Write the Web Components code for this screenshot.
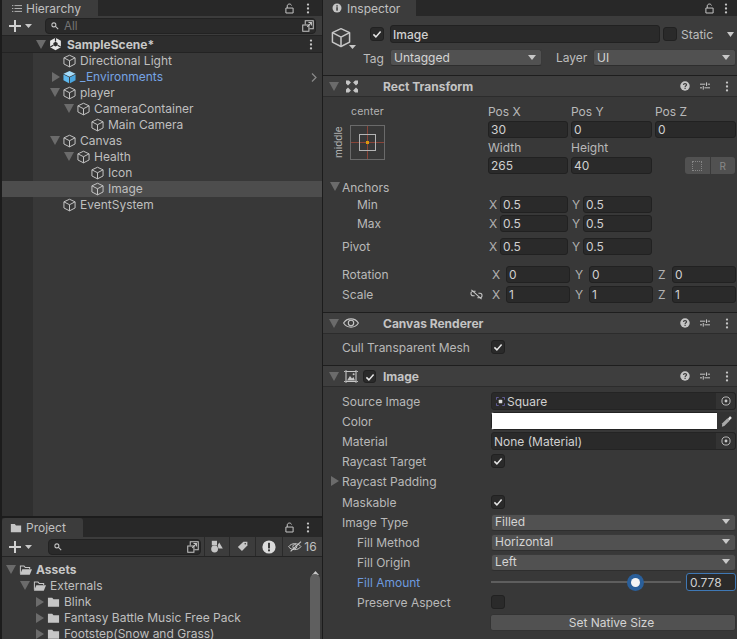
<!DOCTYPE html>
<html><head><meta charset="utf-8"><style>
html,body{margin:0;padding:0;background:#1c1c1c;overflow:hidden}
body{font:12px Inter,"Liberation Sans",sans-serif;color:#bdbdbd}
</style></head><body>
<u-app>
 <u-left slot="left">
  <u-tabbar tabw="96" icon="list">Hierarchy</u-tabbar>
  <u-toolbar search="Hierarchy"></u-toolbar>
  <u-tree stripe>
   <u-row level="0" arrow="down" icon="unity" bold scene>SampleScene*</u-row>
   <u-row level="1" icon="cube">Directional Light</u-row>
   <u-row level="1" arrow="right" icon="bluecube" blue chevron>_Environments</u-row>
   <u-row level="1" arrow="down" icon="cube">player</u-row>
   <u-row level="2" arrow="down" icon="cube">CameraContainer</u-row>
   <u-row level="3" icon="cube">Main Camera</u-row>
   <u-row level="1" arrow="down" icon="cube">Canvas</u-row>
   <u-row level="2" arrow="down" icon="cube">Health</u-row>
   <u-row level="3" icon="cube">Icon</u-row>
   <u-row level="3" icon="cube" selected>Image</u-row>
   <u-row level="1" icon="cube">EventSystem</u-row>
  </u-tree>
 </u-left>
 <u-left slot="left2" project>
  <u-tabbar tabw="81" icon="folder" tall>Project</u-tabbar>
  <u-toolbar search="Project"></u-toolbar>
  <u-ptree>
   <u-row project level="0" arrow="down" icon="open" bold>Assets</u-row>
   <u-row project level="1" arrow="down" icon="open">Externals</u-row>
   <u-row project level="2" arrow="right" icon="folder">Blink</u-row>
   <u-row project level="2" arrow="right" icon="folder">Fantasy Battle Music Free Pack</u-row>
   <u-row project level="2" arrow="right" icon="folder">Footstep(Snow and Grass)</u-row>
  </u-ptree>
 </u-left>
 <u-inspector slot="right">
  <u-tabbar tabw="93" icon="info" inspector>Inspector</u-tabbar>
  <u-go></u-go>

  <u-comp icon="rect">Rect Transform</u-comp>
  <u-rectblock>
   <u-cap>Pos X</u-cap><u-cap>Pos Y</u-cap><u-cap>Pos Z</u-cap>
   <u-field>30</u-field><u-field>0</u-field><u-field>0</u-field>
   <u-cap>Width</u-cap><u-cap>Height</u-cap><span></span>
   <u-field>265</u-field><u-field>40</u-field><u-rbtns></u-rbtns>
  </u-rectblock>
  <u-prop arrow h="18" t="4" start="488">Anchors</u-prop>
  <u-prop indent h="17" start="488"><u-axes slot="v" n="2"><u-axis>X</u-axis><u-field>0.5</u-field><u-axis>Y</u-axis><u-field>0.5</u-field></u-axes>Min</u-prop>
  <u-prop indent h="17" t="2" start="488"><u-axes slot="v" n="2"><u-axis>X</u-axis><u-field>0.5</u-field><u-axis>Y</u-axis><u-field>0.5</u-field></u-axes>Max</u-prop>
  <u-prop h="18" t="5" start="488"><u-axes slot="v" n="2"><u-axis>X</u-axis><u-field>0.5</u-field><u-axis>Y</u-axis><u-field>0.5</u-field></u-axes>Pivot</u-prop>
  <u-prop h="18" t="10" start="491"><u-axes slot="v" n="3"><u-axis>X</u-axis><u-field>0</u-field><u-axis>Y</u-axis><u-field>0</u-field><u-axis>Z</u-axis><u-field>0</u-field></u-axes>Rotation</u-prop>
  <u-prop h="18" t="2" start="491" unlink><u-axes slot="v" n="3"><u-axis>X</u-axis><u-field>1</u-field><u-axis>Y</u-axis><u-field>1</u-field><u-axis>Z</u-axis><u-field>1</u-field></u-axes>Scale</u-prop>

  <u-comp icon="eye" t="9">Canvas Renderer</u-comp>
  <u-prop h="20" t="3"><u-check slot="v" on></u-check>Cull Transparent Mesh</u-prop>

  <u-comp icon="image" check t="8">Image</u-comp>
  <u-prop h="20" t="4"><u-objfield slot="v" kind="sprite">Square</u-objfield>Source Image</u-prop>
  <u-prop h="20"><u-colorfield slot="v"></u-colorfield>Color</u-prop>
  <u-prop h="20"><u-objfield slot="v">None (Material)</u-objfield>Material</u-prop>
  <u-prop h="20"><u-check slot="v" on></u-check>Raycast Target</u-prop>
  <u-prop h="20" arrow="right">Raycast Padding</u-prop>
  <u-prop h="20" t="1"><u-check slot="v" on></u-check>Maskable</u-prop>
  <u-prop h="20"><u-select slot="v">Filled</u-select>Image Type</u-prop>
  <u-prop h="20" indent><u-select slot="v">Horizontal</u-select>Fill Method</u-prop>
  <u-prop h="20" indent><u-select slot="v">Left</u-select>Fill Origin</u-prop>
  <u-prop h="20" indent blue><u-slider slot="v" value="0.778"></u-slider>Fill Amount</u-prop>
  <u-prop h="20" indent><u-check slot="v"></u-check>Preserve Aspect</u-prop>
  <u-button>Set Native Size</u-button>
 </u-inspector>
</u-app>
<script>
const C='#c6c6c6';
const ICONS={
 cube:`<svg viewBox="0 0 14 14" fill="none" stroke="${C}" stroke-width="1.05" stroke-linejoin="round"><path d="M7 .8 13 3.6V10.2L7 13.3 1 10.2V3.6Z"/><path d="M1 3.6 7 6.7 13 3.6M7 6.7V13.3"/></svg>`,
 bluecube:`<svg viewBox="0 0 14 14"><path d="M7 .5 13.5 3.5 7 6.6.5 3.5Z" fill="#a5dcfb"/><path d="M.5 4.4 6.5 7.4V13.7L.5 10.6Z" fill="#5db8ee"/><path d="M13.5 4.4 7.5 7.4V13.7L13.5 10.6Z" fill="#4aa6e0"/></svg>`,
 unity:`<svg viewBox="0 0 14 14"><path d="M7 .3 12.8 3.6V10.4L7 13.7 1.2 10.4V3.6Z" fill="#e8e8e8"/><path d="M7 4.4V.6M4.7 8.3 1.4 10.2M9.3 8.3 12.6 10.2" stroke="#2c2c2c" stroke-width="1.3"/><path d="M7 4.6 9.3 5.9V8.3L7 9.6 4.7 8.3V5.9Z" fill="#2c2c2c"/></svg>`,
 folder:`<svg viewBox="0 0 14 14"><path d="M1 2.4H5.6L7 4H13V12H1Z" fill="${C}"/></svg>`,
 open:`<svg viewBox="0 0 14 14" fill="none"><path d="M1.5 11V2.8H5.4L6.8 4.4H11.5V6" stroke="${C}" stroke-width="1.1"/><path d="M1 12 3.6 6.2H14L11.6 12Z" fill="${C}"/></svg>`,
 list:`<svg viewBox="0 0 12 10" fill="none" stroke="${C}"><path d="M3 1.5H12M3 5H12M3 8.5H12M0 1.5H1.6M0 5H1.6M0 8.5H1.6"/></svg>`,
 info:`<svg viewBox="0 0 12 12"><circle cx="6" cy="6" r="5.4" fill="${C}"/><rect x="5.2" y="5" width="1.7" height="4.2" fill="#303030"/><rect x="5.2" y="2.7" width="1.7" height="1.6" fill="#303030"/></svg>`,
 lock:`<svg viewBox="0 0 10 12" fill="none" stroke="${C}" stroke-width="1.1"><path d="M1 5.5H9V11H1Z"/><path d="M2.5 5.5V3.2C2.5 .6 6.6 .3 7.2 2.6"/></svg>`,
 dots:`<svg viewBox="0 0 4 12" fill="${C}"><circle cx="2" cy="1.7" r="1.25"/><circle cx="2" cy="6" r="1.25"/><circle cx="2" cy="10.3" r="1.25"/></svg>`,
 help:`<svg viewBox="0 0 11 11"><circle cx="5.5" cy="5.5" r="5.2" fill="${C}"/><path d="M3.7 4.2C3.9 2.4 7.3 2.5 7.3 4.2 7.3 5.3 5.6 5.3 5.6 6.6" fill="none" stroke="#3c3c3c" stroke-width="1.2"/><rect x="4.9" y="7.4" width="1.4" height="1.3" fill="#3c3c3c"/></svg>`,
 sliders:`<svg viewBox="0 0 11 10" fill="none" stroke="${C}" stroke-width="1.1"><path d="M0 3H5.8M8.5 3H11M7.2 1V5M0 7H2.3M5 7H11M3.6 5V9"/></svg>`,
 rect:`<svg viewBox="0 0 13 13" fill="${C}"><path d="M.5 .5H3.4L5.4 2.5 2.5 5.4.5 3.4ZM12.5 .5V3.4L10.5 5.4 7.6 2.5 9.6 .5ZM.5 12.5V9.6L2.5 7.6 5.4 10.5 3.4 12.5ZM12.5 12.5H9.6L7.6 10.5 10.5 7.6 12.5 9.6Z"/></svg>`,
 eye:`<svg viewBox="0 0 16 12" fill="none" stroke="${C}" stroke-width="1.1"><path d="M.6 6C4 .5 12 .5 15.4 6 12 11.5 4 11.5.6 6Z"/><circle cx="8" cy="6" r="2.7"/></svg>`,
 image:`<svg viewBox="0 0 14 13" fill="none" stroke="${C}" stroke-width="1.1"><path d="M2 1.5H12V11.5H2Z"/><path d="M0 1.5H1.5M0 11.5H1.5M12.5 1.5H14M12.5 11.5H14M2 0V1M12 0V1M2 12V13M12 12V13" stroke-width=".9"/><path d="M3 10.5 6 6 8 8.4 9.5 7 11 10.5Z" fill="${C}" stroke="none"/><circle cx="9.6" cy="4.2" r="1" fill="${C}" stroke="none"/></svg>`,
 unlink:`<svg viewBox="0 0 13 11" fill="none" stroke="${C}" stroke-width="1.05"><path d="M5.6 2.2H3C.3 2.2.3 6.8 3 6.8H4.6M7.4 8.8H10C12.7 8.8 12.7 4.2 10 4.2H8.4M1.4 .8 11.6 10.2"/></svg>`,
 search:`<svg viewBox="0 0 10 10" fill="none" stroke="${C}" stroke-width="1.3"><circle cx="3.6" cy="3.6" r="2.5"/><path d="M5.6 5.6 9 9"/></svg>`,
 link:`<svg viewBox="0 0 13 13" fill="none" stroke="${C}" stroke-width="1.1"><path d="M3.5 5V.8H12.2V9.5H8"/><path d="M.8 5.5H7.5V12.2H.8Z"/><path d="M5.6 7.4 10 3M7 2.8H10.2V6" /></svg>`,
 shapes:`<svg viewBox="0 0 12 13" fill="${C}"><circle cx="3.6" cy="9" r="3.4"/><path d="M.8 .8H6V5.4H.8Z"/><path d="M8.2 2.4 11.8 8.4H7.4L6.8 5Z"/></svg>`,
 tag:`<svg viewBox="0 0 12 12" fill="${C}"><path d="M7 .8H11.3V5L5.4 11 .9 6.6Z"/><circle cx="9" cy="3" r=".9" fill="#3c3c3c"/></svg>`,
 warn:`<svg viewBox="0 0 14 14"><circle cx="7" cy="7" r="6.6" fill="#dcdcdc"/><rect x="6" y="2.8" width="2" height="5.6" fill="#3c3c3c"/><rect x="6" y="9.4" width="2" height="1.9" fill="#3c3c3c"/></svg>`,
 eyeslash:`<svg viewBox="0 0 14 11" fill="none" stroke="${C}" stroke-width="1"><path d="M.6 5.8C3.5 1.6 10 1.6 13 5.6 10 9.6 3.6 9.6.6 5.8Z"/><circle cx="6.8" cy="5.6" r="2"/><path d="M13 .6 2.6 10.4" stroke-width="1.2"/></svg>`,
 target:`<svg viewBox="0 0 11 11" fill="none" stroke="${C}"><circle cx="5.5" cy="5.5" r="4.5"/><circle cx="5.5" cy="5.5" r="1.6" fill="${C}" stroke="none"/></svg>`,
 dropper:`<svg viewBox="0 0 12 12"><path d="M6.8 2.6 9.4 5.2 3.6 11 1 11.6 1.4 8Z" fill="#a8a8a8"/><path d="M6 1.8 7.6 3 9.2.9C10.4 0 12.2 1.6 11.2 2.9L9.2 4.6 10.4 6Z" fill="#e0e0e0"/></svg>`,
 sprite:`<svg viewBox="0 0 10 10" fill="none"><path d="M.5 3V.5H3M7 .5H9.5V3M9.5 7V9.5H7M3 9.5H.5V7" stroke="#6a64a8"/><rect x="3" y="3" width="4" height="4" rx="1" fill="#dcdcdc"/></svg>`,
 check:`<svg viewBox="0 0 14 14" fill="none" stroke="#e6e6e6" stroke-width="1.5"><path d="M3.4 7.4 5.9 9.9 10.6 4.4"/></svg>`
};
const tri=(d,c='#6b6b6b')=>d==='right'
 ?`<svg viewBox="0 0 9 10" width="9" height="10"><path d="M1 0 9 5 1 10Z" fill="${c}"/></svg>`
 :`<svg viewBox="0 0 10 9" width="10" height="9"><path d="M0 0H10L5 9Z" fill="${c}"/></svg>`;
const down=(w=8,h=5,c='#c8c8c8')=>`<svg viewBox="0 0 8 5" width="${w}" height="${h}" preserveAspectRatio="none"><path d="M0 0H8L4 5Z" fill="${c}"/></svg>`;
const ic=(n,w,h=w)=>`<span style="display:inline-flex;width:${w}px;height:${h}px;flex:none">${ICONS[n].replace('<svg ',`<svg width="${w}" height="${h}" `)}</span>`;
function def(name,fn){customElements.define(name,class extends HTMLElement{
 connectedCallback(){if(!this.shadowRoot){this.attachShadow({mode:'open'}).innerHTML=fn(this)}}
})}
const A=(e,n)=>e.getAttribute(n),H=(e,n)=>e.hasAttribute(n);

def('u-app',()=>`<style>:host{display:grid;grid-template-columns:322px 415px;grid-template-rows:516px 123px;column-gap:0;width:737px;height:639px;overflow:hidden;background:#1c1c1c}
 .a{grid-column:1;grid-row:1;display:block;padding-left:2px;min-width:0}.b{grid-column:1;grid-row:2;padding:2px 0 0 2px;min-width:0}.c{grid-column:2;grid-row:1/3;padding-left:1px;min-width:0}</style>
 <div class="a"><slot name="left"></slot></div><div class="b"><slot name="left2"></slot></div><div class="c"><slot name="right"></slot></div>`);
def('u-left',e=>`<style>:host{display:flex;flex-direction:column;height:100%;background:#383838;overflow:hidden}</style><slot></slot>`);
def('u-inspector',e=>`<style>:host{display:flex;flex-direction:column;height:639px;background:#383838;overflow:hidden}</style><slot></slot>`);
def('u-tabbar',e=>{const tall=H(e,'tall'),ins=H(e,'inspector');const h=tall?19:16;
 return `<style>:host{display:flex;align-items:center;height:${h}px;background:#282828;flex:none;color:#c0c0c0}
 .t{display:flex;align-items:center;height:100%;width:${A(e,'tabw')}px;background:#3c3c3c;box-sizing:border-box;padding-left:${ins?9:tall?8:10}px;gap:${ins?5:tall?4:4}px;${tall?'border-radius:3px 3px 0 0;':''}}
 .r{margin-left:auto;display:flex;align-items:center;gap:${ins?10:12}px;padding-right:${ins?9:12}px}</style>
 <div class="t">${ic(A(e,'icon'),A(e,'icon')==='list'?10:(ins?10:12),A(e,'icon')==='list'?9:(ins?10:12))}<slot></slot></div>
 <div class="r">${ic('lock',9,11)}${ic('dots',4,11)}</div>`});
def('u-toolbar',e=>{const p=A(e,'search')==='Project';
 return `<style>:host{display:flex;align-items:center;height:20px;box-sizing:border-box;background:#3c3c3c;border-bottom:1px solid #242424;flex:none;padding-left:7px}
 .plus{width:12px;height:12px;position:relative;flex:none}.plus:before,.plus:after{content:"";position:absolute;background:#d0d0d0}.plus:before{left:5px;top:0;width:2.2px;height:12px}.plus:after{left:0;top:5px;width:12px;height:2.2px}
 .drop{margin-left:4px;display:flex}
 .s{margin-left:${p?16:13}px;display:flex;align-items:center;width:${p?153:271}px;height:16px;background:#2a2a2a;border:1px solid #222;border-radius:4px;box-sizing:border-box;padding-left:5px;color:#6f6f6f;gap:5px;font-size:11.5px}
 .l{margin-left:auto;margin-right:1px;display:flex}
 .x{display:flex;align-items:center;justify-content:center;height:100%;border-left:1px solid #2a2a2a;box-sizing:border-box}</style>
 <div class="plus"></div><div class="drop">${down(7,4)}</div>
 <div class="s">${ic('search',8,8)}${p?'':'<span style="color:#757575">All</span>'}<span class="l">${ic('link',12,12)}</span></div>
 ${p?`<div class="x" style="width:25px;margin-left:3px">${ic('shapes',12,13)}</div><div class="x" style="width:26px">${ic('tag',11,11)}</div><div class="x" style="width:27px">${ic('warn',14,14)}</div><div class="x" style="width:40px;gap:2px;color:#c0c0c0">${ic('eyeslash',14,11)}<span>16</span></div>`:''}`});
def('u-tree',e=>`<style>:host{display:block;flex:1;background:linear-gradient(to right,#2f2f2f 31px,#383838 31px)}</style><slot></slot>`);
def('u-ptree',e=>`<style>:host{display:block;flex:1;position:relative;padding-top:5px;overflow:hidden}
 .sb{position:absolute;right:2px;top:0;bottom:0;width:10px}.up{position:absolute;left:2px;top:6px}.th{position:absolute;left:0;top:17px;bottom:-10px;width:10px;background:#5f5f5f;border-radius:5px}</style>
 <slot></slot><div class="sb"><div class="up">${down(7,4,'#c8c8c8').replace('M0 0H8L4 5Z','M0 5H8L4 0Z')}</div><div class="th"></div></div>`);
def('u-row',e=>{const l=+A(e,'level'),pr=H(e,'project'),a=A(e,'arrow');const base=pr?2:32;const sc=H(e,'scene');
 return `<style>:host{display:flex;align-items:center;position:relative;height:16px;box-sizing:border-box;padding-left:${base+14*l}px;color:${H(e,'blue')?'#76a4e4':'#bfbfbf'};white-space:nowrap;
 ${sc?'':'padding-bottom:1px;'}${H(e,'selected')?'background:#4d4d4d;':''}${sc?'height:17px;background:#2d2d2d;border-bottom:1px solid #232323;':''}${H(e,'bold')?'font-weight:700;color:#c8c8c8;':''}}
 .a{width:14px;height:15px;display:flex;align-items:center;justify-content:center;flex:none;margin-right:1px}.i{display:flex;margin-right:${sc?5:4}px}
 .c{position:absolute;right:5px;top:4px}.d{position:absolute;right:9px;top:2px}</style>
 <span class="a">${a?tri(a):''}</span><span class="i">${ic(A(e,'icon'),13,14)}</span><slot></slot>
 ${H(e,'chevron')?`<svg class="c" width="6" height="9" viewBox="0 0 6 9" fill="none" stroke="#8a8a8a" stroke-width="1.2"><path d="M1 .5 5 4.5 1 8.5"/></svg>`:''}
 ${sc?`<span class="d">${ic('dots',4,11)}</span>`:''}`});
def('u-go',()=>`<style>:host{display:grid;grid-template-columns:40px 27px 1fr;grid-template-rows:18px 17px;row-gap:6px;height:59px;box-sizing:border-box;padding:9px 1px 0 0;background:#3c3c3c;flex:none;color:#bdbdbd}
 .i{grid-row:1/3;position:relative}.i svg{position:absolute;left:8px;top:2px}.i .t{position:absolute;left:26px;top:20px}.i .t svg{position:static;display:block}
 .r{display:flex;align-items:center;min-width:0}</style>
 <div class="i">${ICONS.cube.replace('<svg ','<svg width="20" height="21" ')}<span class="t">${down(7,4)}</span></div>
 <u-check style="margin:2px 0 0 7px" on></u-check>
 <div class="r"><u-field bold style="flex:1;height:18px">Image</u-field><u-check style="margin-left:3px"></u-check><span style="margin-left:4px;width:46px">Static</span><span style="margin:0 2px 0 0;display:flex">${down(7,5)}</span></div>
 <div style="line-height:19px">Tag</div>
 <div class="r"><u-select style="width:152px;height:17px">Untagged</u-select><span style="margin-left:14px;width:37px">Layer</span><u-select style="flex:1;height:17px">UI</u-select></div>`);
def('u-comp',e=>`<style>:host{display:grid;grid-template-columns:22px 18px 20px 1fr auto;align-items:center;height:22px;box-sizing:border-box;background:#3e3e3e;border-top:1px solid #1e1e1e;border-bottom:1px solid #2c2c2c;flex:none;margin-top:${A(e,'t')||0}px;color:#c4c4c4;font-weight:700}
 .tr{display:flex;justify-content:flex-end;padding-right:6px;padding-top:1px}.ic{display:flex;margin-left:${A(e,'icon')==='eye'?-2:A(e,'icon')==='image'?-1:0}px}
 .tools{display:flex;align-items:center;gap:10px;padding-right:8px}</style>
 <span class="tr">${tri('down')}</span><span class="ic">${ic(A(e,'icon'),A(e,'icon')==='eye'?16:14,A(e,'icon')==='eye'?12:13)}</span>
 <span>${H(e,'check')?'<u-check style="width:13px;height:13px" on></u-check>':''}</span><span><slot></slot></span>
 <span class="tools">${ic('help',10,10)}${ic('sliders',10,10)}<span style="margin-left:5px;display:flex">${ic('dots',4,11)}</span></span>`);
def('u-rectblock',e=>`<style>:host{display:grid;grid-template-columns:165px 1fr;height:70px;padding-top:7px;flex:none;box-sizing:content-box}
 .l{position:relative}.cn{position:absolute;left:28px;top:1px;font-size:10.5px;letter-spacing:.2px;color:#b4b4b4;line-height:14px}
 .m{position:absolute;left:8px;top:21px;height:35px;writing-mode:vertical-rl;transform:rotate(180deg);text-align:center;font-size:10px;line-height:14px;color:#b4b4b4}
 .b{position:absolute;left:27px;top:21px;width:35px;height:35px;box-sizing:border-box;border:1px solid #6a6a6a}
 .h{position:absolute;left:0;right:0;top:16px;height:1px;background:#8a4438}.v{position:absolute;top:0;bottom:0;left:16px;width:1px;background:#8a4438}
 .b i{position:absolute;left:8px;top:8px;width:17px;height:17px;box-sizing:border-box;border:1px solid #b4b4b4}
 .b b{position:absolute;left:15px;top:15px;width:3px;height:3px;background:#dc980e}
 .g{display:grid;grid-template-columns:80px 81px 81px;column-gap:3px;grid-template-rows:16px 18px 19px 17px;padding-right:1px;align-items:center}
 ::slotted(u-field){align-self:end}</style>
 <div class="l"><span class="cn">center</span><span class="m">middle</span><div class="b"><span class="h"></span><span class="v"></span><i></i><b></b></div></div>
 <div class="g"><slot></slot></div>`);
def('u-cap',()=>`<style>:host{display:block;line-height:16px;color:#b8b8b8}</style><slot></slot>`);
def('u-field',e=>`<style>:host{display:flex;align-items:center;height:17px;box-sizing:border-box;background:#2a2a2a;border:1px solid #212121;border-radius:3px;padding-left:2px;color:#d0d0d0;min-width:0;white-space:nowrap;${H(e,'bold')?'font-weight:500;':''}}</style><slot></slot>`);
def('u-rbtns',()=>`<style>:host{display:flex;justify-self:end;width:50px;height:17px;margin-right:1px;background:#515151;border-radius:3px;overflow:hidden;font-size:10px;color:#8a8a8a}
 span{flex:1;display:flex;align-items:center;justify-content:center}span+span{border-left:1px solid #3a3a3a}
 i{width:8px;height:8px;border:1px dotted #858585;display:block}</style><span><i></i></span><span>R</span>`);
def('u-prop',e=>{const s=+(A(e,'start')||491);const ar=A(e,'arrow');
 return `<style>:host{display:grid;grid-template-columns:${s-342}px 1fr;align-items:center;height:${A(e,'h')}px;margin-top:${A(e,'t')||0}px;padding:0 1px 0 19px;flex:none;position:relative;color:${H(e,'blue')?'#6e9adf':'#b8b8b8'};white-space:nowrap}
 .lab{padding-left:${H(e,'indent')?15:0}px}.ar{position:absolute;left:7px;top:50%;margin-top:-5px;display:flex}
 .u{position:absolute;left:147px;top:3px}</style>
 ${ar!==null?`<span class="ar">${tri(ar==='right'?'right':'down')}</span>`:''}
 <span class="lab"><slot></slot></span><slot name="v"></slot>${H(e,'unlink')?`<span class="u">${ic('unlink',13,11)}</span>`:''}`});
def('u-axes',e=>{const n=+A(e,'n');
 return `<style>:host{display:grid;grid-template-columns:${n==2?'12px 71px 12px 69px 84px':'15px 68px 15px 68px 15px 64px'};align-items:center}
 ::slotted(u-field){margin-right:${n==2?3:4}px}::slotted(u-field:last-child){margin-right:0}</style><slot></slot>`});
def('u-axis',()=>`<style>:host{display:block;color:#b0b0b0;padding-left:1px}</style><slot></slot>`);
def('u-check',e=>`<style>:host{display:block;width:14px;height:14px;box-sizing:border-box;background:#2a2a2a;border:1px solid #212121;border-radius:3px;flex:none}svg{display:block;margin:-1px}</style>${H(e,'on')?ICONS.check.replace('<svg ','<svg width="14" height="14" '):''}`);
def('u-select',()=>`<style>:host{display:flex;align-items:center;height:17px;box-sizing:border-box;background:#515151;border:1px solid #3a3a3a;border-bottom-color:#2e2e2e;border-radius:3px;padding:0 5px 1px 3px;color:#d4d4d4;white-space:nowrap}span{margin-left:auto;display:flex}</style><slot></slot><span>${down(8,5)}</span>`);
def('u-objfield',e=>`<style>:host{display:flex;align-items:center;height:18px;box-sizing:border-box;background:#2a2a2a;border:1px solid #242424;border-radius:3px;padding-left:2px;color:#d0d0d0}
 .t{margin-left:auto;width:19px;align-self:stretch;display:flex;align-items:center;justify-content:center;background:#333;border-radius:0 3px 3px 0}.s{display:flex;margin:0 2px 0 2px}</style>
 ${A(e,'kind')?`<span class="s">${ic('sprite',9,9)}</span>`:''}<slot></slot><span class="t">${ic('target',10,10)}</span>`);
def('u-colorfield',()=>`<style>:host{display:flex;height:18px;box-sizing:border-box;background:#2a2a2a;border-radius:3px;overflow:hidden}
 .w{flex:1;background:#fff;border:1px solid #232323;border-width:1px 0 1px 1px}.t{width:19px;display:flex;align-items:center;justify-content:center;background:#333}</style><div class="w"></div><div class="t">${ic('dropper',11,11)}</div>`);
def('u-slider',e=>`<style>:host{display:flex;align-items:center}
 .tr{position:relative;width:190px;height:2px;background:#5e5e5e}.th{position:absolute;left:76.3%;top:1px;width:9px;height:9px;margin:-4.5px;border-radius:50%;background:#f4f4f4;box-shadow:0 0 0 4px #2a5f9a}
 u-field{margin-left:5px;flex:1;border-color:#3f78b5;height:18px;padding-left:3px}</style><div class="tr"><div class="th"></div></div><u-field>${A(e,'value')}</u-field>`);
def('u-button',()=>`<style>:host{display:flex;align-items:center;justify-content:center;height:17px;width:246px;margin:2px 0 0 167px;padding-right:3px;box-sizing:border-box;background:#515151;border:1px solid #333;border-radius:3px;color:#d4d4d4;flex:none}</style><slot></slot>`);
</script>
</body></html>
